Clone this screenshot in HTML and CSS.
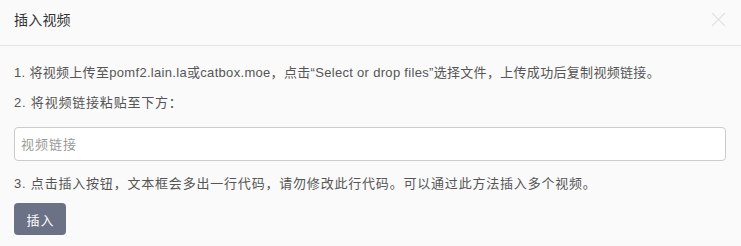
FILE: index.html
```html
<!DOCTYPE html>
<html lang="zh">
<head>
<meta charset="utf-8">
<link rel="stylesheet" href="styles.css">
</head>
<body>
<div class="modal">
  <div class="modal-header">
    <h4 class="modal-title">插入视频</h4>
    <button class="close" aria-label="Close">
      <svg width="15" height="15" viewBox="0 0 15 15"><path d="M1 1L14 14M14 1L1 14" stroke="#e2e2e2" stroke-width="1.2" fill="none"/></svg>
    </button>
  </div>
  <div class="modal-body">
    <p class="step s1">1. 将视频上传至pomf2.lain.la或catbox.moe，点击“Select or drop files”选择文件，上传成功后复制视频链接。</p>
    <p class="step s2">2. 将视频链接粘贴至下方：</p>
    <input class="link-input" type="text" placeholder="视频链接">
    <p class="step s3">3. 点击插入按钮，文本框会多出一行代码，请勿修改此行代码。可以通过此方法插入多个视频。</p>
    <button class="btn">插入</button>
  </div>
</div>
</body>
</html>
```

FILE: styles.css
```css
html, body {
  margin: 0;
  padding: 0;
  background: #fafafa;
}
body {
  font-family: "Liberation Sans", "Noto Sans CJK SC", sans-serif;
  font-size: 13px;
  color: #555;
}
.modal {
  width: 741px;
  height: 246px;
  background: #fafafa;
}
.modal-header {
  height: 45px;
  border-bottom: 1px solid #e5e5e5;
  display: flex;
  align-items: center;
  justify-content: space-between;
  padding: 0 15px 0 14px;
  box-sizing: content-box;
}
.modal-title {
  margin: 0;
  font-size: 14px;
  letter-spacing: 0.2px;
  font-weight: normal;
  color: #333;
  line-height: 20px;
  margin-top: -5px;
}
.close {
  border: 0;
  background: none;
  padding: 0;
  width: 15px;
  height: 15px;
  margin-top: -6px;
  display: flex;
}
.modal-body {
  padding: 17px 14px 0 14px;
  display: flex;
  flex-direction: column;
  align-items: flex-start;
}
.step {
  margin: 0;
  line-height: 20px;
  white-space: nowrap;
}
.s1 { letter-spacing: 0.31px; }
.s2 { margin-top: 10px; letter-spacing: 0.8px; }
.link-input {
  margin-top: 14px;
  width: 712px;
  height: 34px;
  box-sizing: border-box;
  border: 1px solid #ccc;
  border-radius: 4px;
  background: #fff;
  padding: 0 6px;
  font-family: inherit;
  font-size: 13px;
  letter-spacing: 1px;
  color: #555;
  outline: none;
}
.link-input::placeholder { color: #999; }
.s3 { margin-top: 13px; letter-spacing: 0.8px; }
.btn {
  margin-top: 9px;
  width: 52px;
  height: 32px;
  border: 0;
  border-radius: 4px;
  background: #6b7286;
  color: #fff;
  font-family: inherit;
  font-size: 13px;
  letter-spacing: 1px;
  padding: 0 0 0 1px;
}
```
